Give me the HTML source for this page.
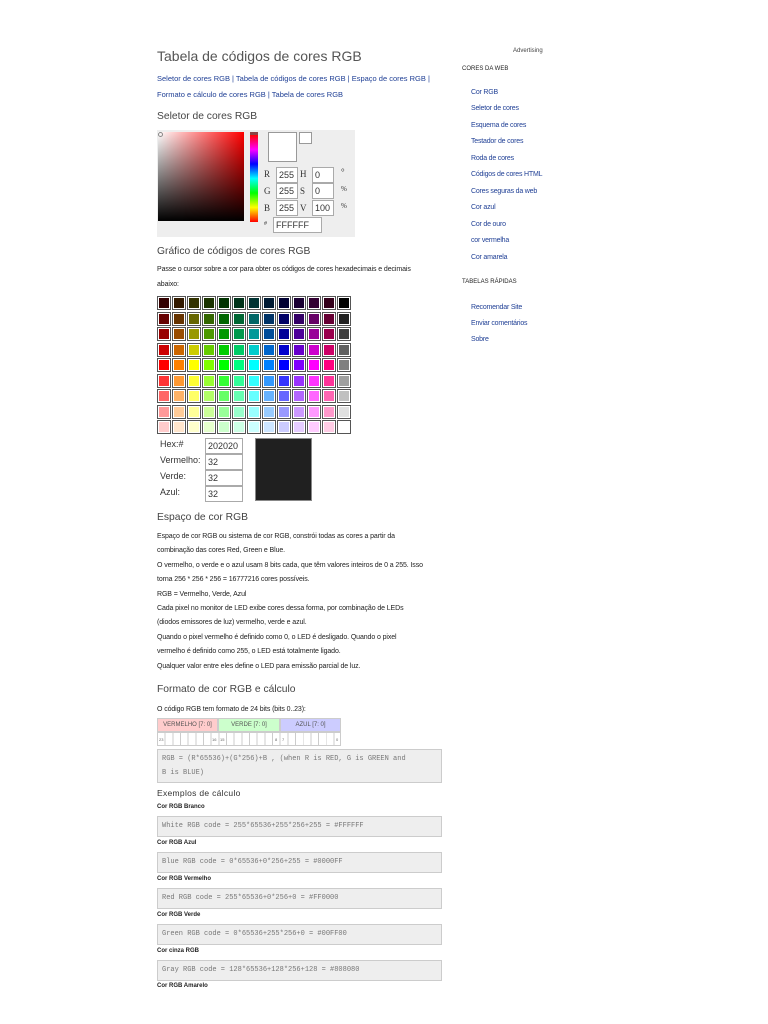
<!DOCTYPE html>
<html><head><meta charset="utf-8"><style>
*{margin:0;padding:0;box-sizing:border-box}
body{width:768px;height:1024px;background:#fff;font-family:"Liberation Sans",sans-serif;position:relative;overflow:hidden;color:#333}
.a{position:absolute;white-space:nowrap}
.lk{color:#1f3f95;font-size:7.5px;letter-spacing:0px}
.h{font-size:10.3px;color:#444}
.p{font-size:7px;color:#222;letter-spacing:-0.1px}
.inp{position:absolute;background:#fff;border:1px solid #aaa;font-size:9px;padding-left:2px;line-height:14px;height:16px}
.lab{position:absolute;font-family:"Liberation Serif",serif;font-size:9px;color:#333}
.grid{position:absolute;left:157px;top:296px;display:grid;grid-template-columns:repeat(13,15px);grid-template-rows:repeat(9,15.5px)}
.grid div{border:1px solid #555;box-shadow:inset 0 0 0 1px #fff;width:14px;height:14px}
.pre{position:absolute;left:157px;width:285px;background:#eee;border:1px solid #ccc;font-family:"Liberation Mono",monospace;font-size:7px;color:#777;padding:0 4px}
.cl{position:absolute;left:157px;font-size:6px;font-weight:bold;color:#222}
.sb{position:absolute;left:471px;font-size:7px;color:#1f3f95;letter-spacing:-0.2px}
</style></head><body>
<div class="a" style="left:157px;top:48px;font-size:14px;color:#555">Tabela de códigos de cores RGB</div>
<div class="a lk" style="left:157px;top:74px">Seletor de cores RGB | Tabela de códigos de cores RGB | Espaço de cores RGB |</div>
<div class="a lk" style="left:157px;top:90px">Formato e cálculo de cores RGB | Tabela de cores RGB</div>
<div class="a h" style="left:157px;top:111px">Seletor de cores RGB</div>

<div class="a" style="left:157px;top:130px;width:198px;height:107px;background:#eee"></div>
<div class="a" style="left:158px;top:132px;width:86px;height:89px;background:linear-gradient(to top,#000,rgba(0,0,0,0)),linear-gradient(to right,#fff,#f00)"></div>
<div class="a" style="left:158px;top:132px;width:5px;height:5px;border:1px solid #888;border-radius:50%"></div>
<div class="a" style="left:250px;top:132px;width:8px;height:90px;background:linear-gradient(to bottom,#f00,#f0f,#00f,#0ff,#0f0,#ff0,#f00);border-top:3px solid #844"></div>
<div class="a" style="left:268px;top:132px;width:29px;height:30px;background:#fff;border:1px solid #999"></div>
<div class="a" style="left:299px;top:132px;width:13px;height:12px;background:#fff;border:1px solid #999"></div>
<div class="lab" style="left:264px;top:169px">R</div><div class="inp" style="left:276px;top:167px;width:22px">255</div>
<div class="lab" style="left:300px;top:169px">H</div><div class="inp" style="left:312px;top:167px;width:22px">0</div><div class="lab" style="left:341px;top:167px">°</div>
<div class="lab" style="left:264px;top:186px">G</div><div class="inp" style="left:276px;top:183px;width:22px">255</div>
<div class="lab" style="left:300px;top:186px">S</div><div class="inp" style="left:312px;top:183px;width:22px">0</div><div class="lab" style="left:341px;top:185px;font-size:7px">%</div>
<div class="lab" style="left:264px;top:203px">B</div><div class="inp" style="left:276px;top:200px;width:22px">255</div>
<div class="lab" style="left:300px;top:203px">V</div><div class="inp" style="left:312px;top:200px;width:22px">100</div><div class="lab" style="left:341px;top:202px;font-size:7px">%</div>
<div class="lab" style="left:264px;top:221px;font-size:6px">#</div><div class="inp" style="left:273px;top:217px;width:49px">FFFFFF</div>

<div class="a h" style="left:157px;top:246px">Gráfico de códigos de cores RGB</div>
<div class="a p" style="left:157px;top:266px">Passe o cursor sobre a cor para obter os códigos de cores hexadecimais e decimais</div>
<div class="a p" style="left:157px;top:281px">abaixo:</div>

<div class="grid">
<div style="background:#330000"></div><div style="background:#331a00"></div><div style="background:#333300"></div><div style="background:#1a3300"></div><div style="background:#003300"></div><div style="background:#00331a"></div><div style="background:#003333"></div><div style="background:#001a33"></div><div style="background:#000033"></div><div style="background:#1a0033"></div><div style="background:#330033"></div><div style="background:#33001a"></div><div style="background:#000"></div>
<div style="background:#660000"></div><div style="background:#663300"></div><div style="background:#666600"></div><div style="background:#336600"></div><div style="background:#006600"></div><div style="background:#006633"></div><div style="background:#006666"></div><div style="background:#003366"></div><div style="background:#000066"></div><div style="background:#330066"></div><div style="background:#660066"></div><div style="background:#660033"></div><div style="background:#202020"></div>
<div style="background:#990000"></div><div style="background:#994c00"></div><div style="background:#999900"></div><div style="background:#4c9900"></div><div style="background:#009900"></div><div style="background:#00994c"></div><div style="background:#009999"></div><div style="background:#004c99"></div><div style="background:#000099"></div><div style="background:#4c0099"></div><div style="background:#990099"></div><div style="background:#99004c"></div><div style="background:#404040"></div>
<div style="background:#cc0000"></div><div style="background:#cc6600"></div><div style="background:#cccc00"></div><div style="background:#66cc00"></div><div style="background:#00cc00"></div><div style="background:#00cc66"></div><div style="background:#00cccc"></div><div style="background:#0066cc"></div><div style="background:#0000cc"></div><div style="background:#6600cc"></div><div style="background:#cc00cc"></div><div style="background:#cc0066"></div><div style="background:#606060"></div>
<div style="background:#ff0000"></div><div style="background:#ff8000"></div><div style="background:#ffff00"></div><div style="background:#80ff00"></div><div style="background:#00ff00"></div><div style="background:#00ff80"></div><div style="background:#00ffff"></div><div style="background:#0080ff"></div><div style="background:#0000ff"></div><div style="background:#7f00ff"></div><div style="background:#ff00ff"></div><div style="background:#ff007f"></div><div style="background:#808080"></div>
<div style="background:#ff3333"></div><div style="background:#ff9933"></div><div style="background:#ffff33"></div><div style="background:#99ff33"></div><div style="background:#33ff33"></div><div style="background:#33ff99"></div><div style="background:#33ffff"></div><div style="background:#3399ff"></div><div style="background:#3333ff"></div><div style="background:#9933ff"></div><div style="background:#ff33ff"></div><div style="background:#ff3399"></div><div style="background:#a0a0a0"></div>
<div style="background:#ff6666"></div><div style="background:#ffb266"></div><div style="background:#ffff66"></div><div style="background:#b2ff66"></div><div style="background:#66ff66"></div><div style="background:#66ffb2"></div><div style="background:#66ffff"></div><div style="background:#66b2ff"></div><div style="background:#6666ff"></div><div style="background:#b266ff"></div><div style="background:#ff66ff"></div><div style="background:#ff66b2"></div><div style="background:#c0c0c0"></div>
<div style="background:#ff9999"></div><div style="background:#ffcc99"></div><div style="background:#ffff99"></div><div style="background:#ccff99"></div><div style="background:#99ff99"></div><div style="background:#99ffcc"></div><div style="background:#99ffff"></div><div style="background:#99ccff"></div><div style="background:#9999ff"></div><div style="background:#cc99ff"></div><div style="background:#ff99ff"></div><div style="background:#ff99cc"></div><div style="background:#e0e0e0"></div>
<div style="background:#ffcccc"></div><div style="background:#ffe5cc"></div><div style="background:#ffffcc"></div><div style="background:#e5ffcc"></div><div style="background:#ccffcc"></div><div style="background:#ccffe5"></div><div style="background:#ccffff"></div><div style="background:#cce5ff"></div><div style="background:#ccccff"></div><div style="background:#e5ccff"></div><div style="background:#ffccff"></div><div style="background:#ffcce5"></div><div style="background:#ffffff"></div>
</div>

<div class="a" style="left:160px;top:439px;font-size:9px">Hex:#</div><div class="inp" style="left:205px;top:438px;width:38px">202020</div>
<div class="a" style="left:160px;top:455px;font-size:9px">Vermelho:</div><div class="inp" style="left:205px;top:454px;width:38px">32</div>
<div class="a" style="left:160px;top:471px;font-size:9px">Verde:</div><div class="inp" style="left:205px;top:470px;width:38px">32</div>
<div class="a" style="left:160px;top:487px;font-size:9px">Azul:</div><div class="inp" style="left:205px;top:486px;width:38px">32</div>
<div class="a" style="left:255px;top:438px;width:57px;height:63px;background:#202020;border:1px solid #888"></div>

<div class="a h" style="left:157px;top:512px">Espaço de cor RGB</div>
<div class="a p" style="left:157px;top:533px">Espaço de cor RGB ou sistema de cor RGB, constrói todas as cores a partir da</div>
<div class="a p" style="left:157px;top:547px">combinação das cores Red, Green e Blue.</div>
<div class="a p" style="left:157px;top:562px">O vermelho, o verde e o azul usam 8 bits cada, que têm valores inteiros de 0 a 255. Isso</div>
<div class="a p" style="left:157px;top:576px">torna 256 * 256 * 256 = 16777216 cores possíveis.</div>
<div class="a p" style="left:157px;top:591px">RGB = Vermelho, Verde, Azul</div>
<div class="a p" style="left:157px;top:605px">Cada pixel no monitor de LED exibe cores dessa forma, por combinação de LEDs</div>
<div class="a p" style="left:157px;top:619px">(diodos emissores de luz) vermelho, verde e azul.</div>
<div class="a p" style="left:157px;top:634px">Quando o pixel vermelho é definido como 0, o LED é desligado. Quando o pixel</div>
<div class="a p" style="left:157px;top:648px">vermelho é definido como 255, o LED está totalmente ligado.</div>
<div class="a p" style="left:157px;top:663px">Qualquer valor entre eles define o LED para emissão parcial de luz.</div>

<div class="a h" style="left:157px;top:684px">Formato de cor RGB e cálculo</div>
<div class="a p" style="left:157px;top:706px">O código RGB tem formato de 24 bits (bits 0..23):</div>
<div class="a" style="left:157px;top:718px;width:61px;height:14px;background:#ffcccc;border:1px solid #ccc;font-size:6px;color:#555;text-align:center;line-height:12px">VERMELHO [7: 0]</div>
<div class="a" style="left:218px;top:718px;width:62px;height:14px;background:#ccffcc;border:1px solid #ccc;font-size:6px;color:#555;text-align:center;line-height:12px">VERDE [7: 0]</div>
<div class="a" style="left:280px;top:718px;width:61px;height:14px;background:#ccccff;border:1px solid #ccc;font-size:6px;color:#555;text-align:center;line-height:12px">AZUL [7: 0]</div>
<div class="a" style="left:157px;top:732px;width:184px;height:14px;border:1px solid #ccc;background:repeating-linear-gradient(to right,#fff 0,#fff 6.7px,#ccc 6.7px,#ccc 7.67px);font-size:4px;color:#666">
<span style="position:absolute;left:1px;top:4px">23</span><span style="position:absolute;left:54px;top:4px">16</span><span style="position:absolute;left:62px;top:4px">15</span><span style="position:absolute;left:117px;top:4px">8</span><span style="position:absolute;left:124px;top:4px">7</span><span style="position:absolute;left:178px;top:4px">0</span></div>
<div class="pre" style="top:749px;height:34px;line-height:14px;padding-top:2px">RGB = (R*65536)+(G*256)+B , (when R is RED, G is GREEN and<br>B is BLUE)</div>
<div class="a" style="left:157px;top:788px;font-size:8.5px;color:#333;letter-spacing:0.3px">Exemplos de cálculo</div>
<div class="cl" style="top:804px">Cor RGB Branco</div>
<div class="pre" style="top:816px;height:21px;line-height:19px">White RGB code = 255*65536+255*256+255 = #FFFFFF</div>
<div class="cl" style="top:840px">Cor RGB Azul</div>
<div class="pre" style="top:852px;height:21px;line-height:19px">Blue RGB code = 0*65536+0*256+255 = #0000FF</div>
<div class="cl" style="top:876px">Cor RGB Vermelho</div>
<div class="pre" style="top:888px;height:21px;line-height:19px">Red RGB code = 255*65536+0*256+0 = #FF0000</div>
<div class="cl" style="top:912px">Cor RGB Verde</div>
<div class="pre" style="top:924px;height:21px;line-height:19px">Green RGB code = 0*65536+255*256+0 = #00FF00</div>
<div class="cl" style="top:948px">Cor cinza RGB</div>
<div class="pre" style="top:960px;height:21px;line-height:19px">Gray RGB code = 128*65536+128*256+128 = #808080</div>
<div class="cl" style="top:983px">Cor RGB Amarelo</div>

<div class="a" style="left:513px;top:48px;font-size:6px;color:#444">Advertising</div>
<div class="a" style="left:462px;top:66px;font-size:6px;color:#222">CORES DA WEB</div>
<div class="sb" style="top:89px">Cor RGB</div>
<div class="sb" style="top:105px">Seletor de cores</div>
<div class="sb" style="top:122px">Esquema de cores</div>
<div class="sb" style="top:138px">Testador de cores</div>
<div class="sb" style="top:155px">Roda de cores</div>
<div class="sb" style="top:171px">Códigos de cores HTML</div>
<div class="sb" style="top:188px">Cores seguras da web</div>
<div class="sb" style="top:204px">Cor azul</div>
<div class="sb" style="top:221px">Cor de ouro</div>
<div class="sb" style="top:237px">cor vermelha</div>
<div class="sb" style="top:254px">Cor amarela</div>
<div class="a" style="left:462px;top:279px;font-size:6px;color:#222">TABELAS RÁPIDAS</div>
<div class="sb" style="top:304px">Recomendar Site</div>
<div class="sb" style="top:320px">Enviar comentários</div>
<div class="sb" style="top:336px">Sobre</div>
</body></html>
